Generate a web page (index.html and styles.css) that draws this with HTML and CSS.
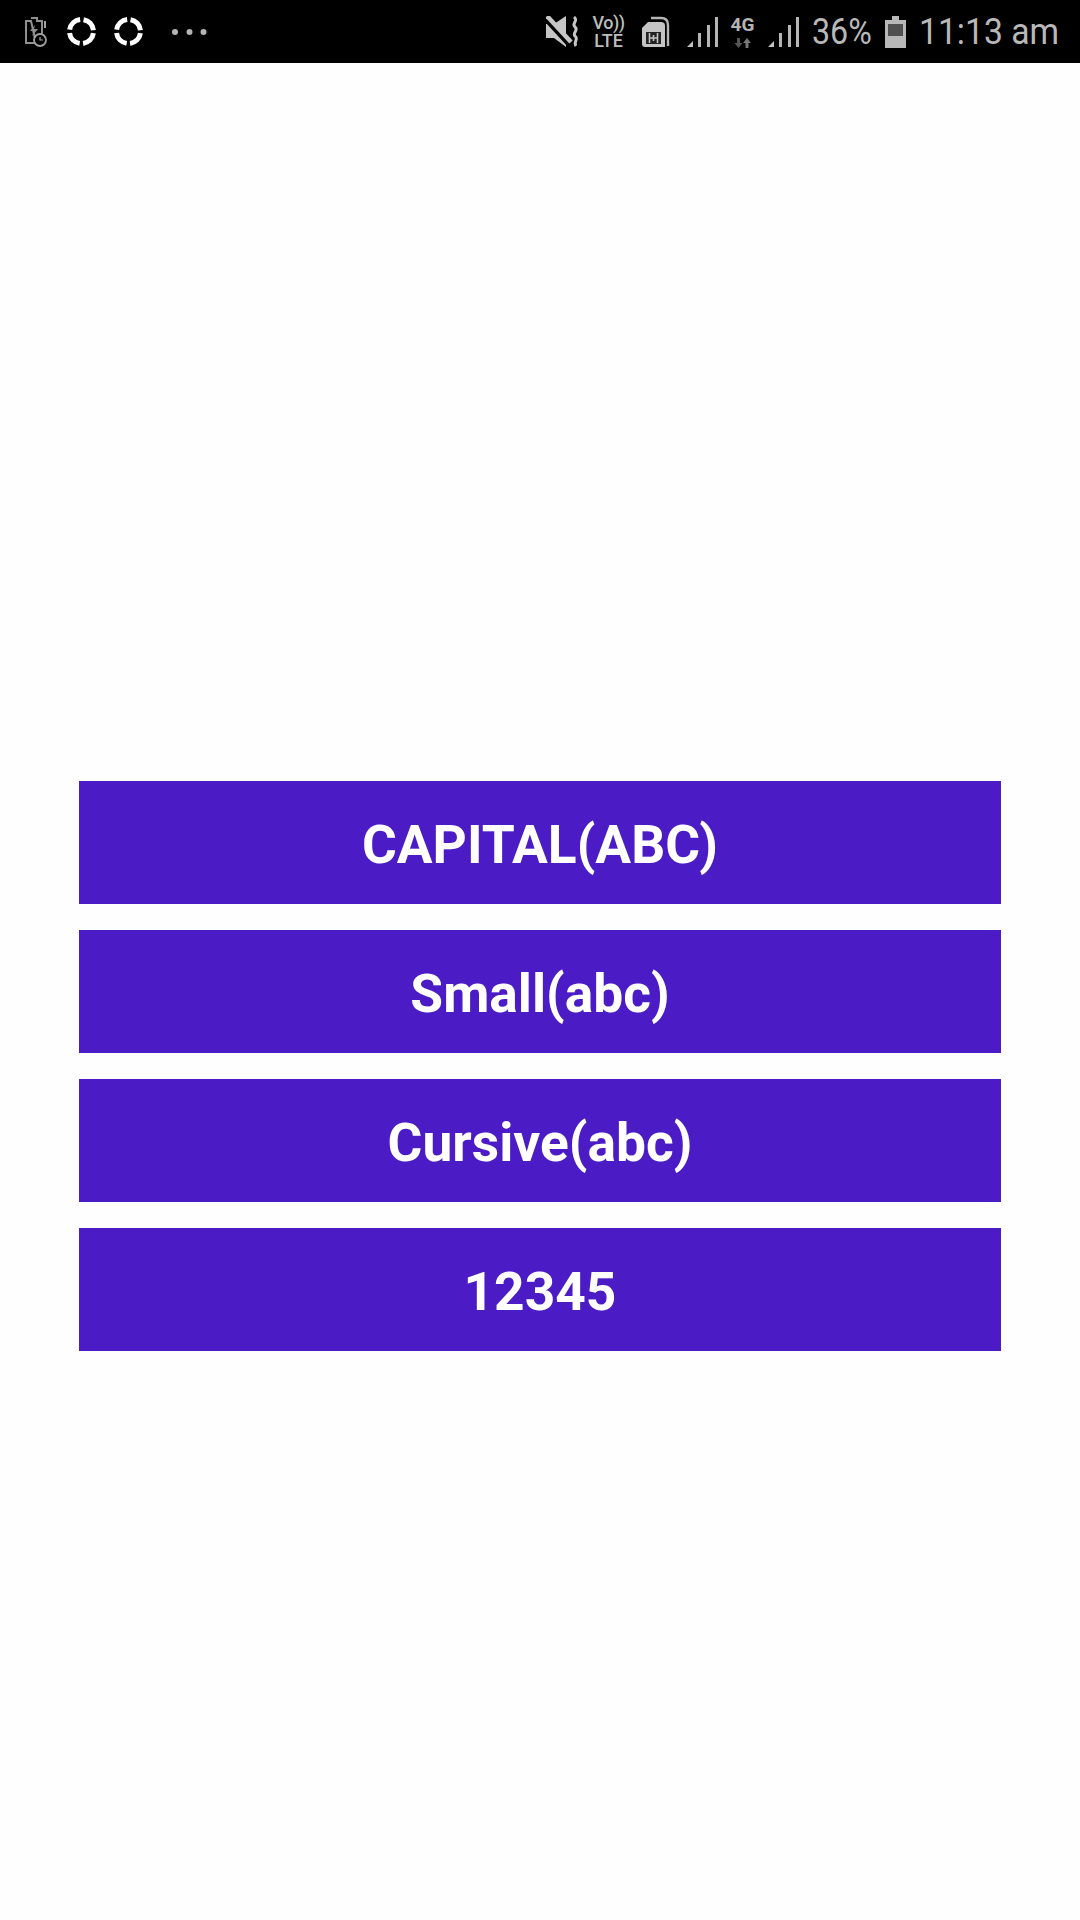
FILE: index.html
```html
<!DOCTYPE html>
<html lang="en">
<head>
<meta charset="utf-8">
<title>Letters</title>
<link rel="stylesheet" href="styles.css">
</head>
<body>
<div class="status">
  <div class="status-left">
    <svg class="i-charge" viewBox="0 0 24 30"><path d="M7 1h6v3h5v14M12 26H2V4h5z" fill="none" stroke="#8f8f8f" stroke-width="2"/><path d="M11 8L6 14h4l-2 5 6-7h-4z" fill="#8f8f8f"/><path d="M21 4v7" stroke="#a0a0a0" stroke-width="2"/><circle cx="16" cy="23" r="6" fill="#000" stroke="#a0a0a0" stroke-width="1.8"/><path d="M16 20v3h3" fill="none" stroke="#a0a0a0" stroke-width="1.2"/></svg>
    <svg class="i-ring" viewBox="0 0 29 29"><circle cx="14.5" cy="14.5" r="12" fill="none" stroke="#fff" stroke-width="5" stroke-dasharray="15.35 3.5" stroke-dashoffset="-1.75"/></svg>
    <svg class="i-ring" viewBox="0 0 29 29"><circle cx="14.5" cy="14.5" r="12" fill="none" stroke="#fff" stroke-width="5" stroke-dasharray="15.35 3.5" stroke-dashoffset="-1.75"/></svg>
    <svg class="i-dots" viewBox="0 0 36 8"><circle cx="3" cy="4" r="3" fill="#b5b5b5"/><circle cx="17.5" cy="4" r="3" fill="#b5b5b5"/><circle cx="31.5" cy="4" r="3" fill="#b5b5b5"/></svg>
  </div>
  <div class="status-right">
    <svg class="i-mute" viewBox="0 0 34 31"><path d="M0 8h8L20 0v31L8 22H0z" fill="#c6c6c6"/><path d="M1 3l24 26" stroke="#000" stroke-width="7"/><path d="M1 0l24 26" stroke="#c6c6c6" stroke-width="4.500"/><path d="M28 1c5 4-3 6 1 10 4 3-3 6 0 9 4 3-2 6 1 10" fill="none" stroke="#c6c6c6" stroke-width="3"/></svg>
    <div class="volte"><span class="vo">Vo))</span><span class="lte">LTE</span></div>
    <svg class="i-sim" viewBox="0 0 29 32"><path d="M10 2h10q7 0 7 7v21" fill="none" stroke="#b5b5b5" stroke-width="2.4"/><path d="M7 6h13q4 0 4 4v21H4q-3 0-3-3V12z" fill="#c4c4c4"/><rect x="5" y="16" width="15" height="12" fill="#222"/><path d="M8.500 17v10M16.500 17v10M8.500 22h8M12.500 19v6" stroke="#c4c4c4" stroke-width="1.600"/></svg>
    <svg class="i-signal" viewBox="0 0 31 31"><path d="M0 31l6-6v6z" fill="#c2c2c2"/><path d="M11 17h3v14h-3zM20 9h3v22h-3zM28 1h3v30h-3z" fill="#b5b5b5"/></svg>
    <div class="net"><span class="net-4g">4G</span><svg class="i-arrows" viewBox="0 0 18 10"><path d="M3 0h3v5h2.500L4.500 10 .5 5H3z" fill="#555"/><path d="M13 0l4 5h-2.500v5h-3V5H9z" fill="#777"/></svg></div>
    <svg class="i-signal" viewBox="0 0 31 31"><path d="M0 31l6-6v6z" fill="#c2c2c2"/><path d="M11 17h3v14h-3zM20 9h3v22h-3zM28 1h3v30h-3z" fill="#b5b5b5"/></svg>
    <span class="pct">36%</span>
    <svg class="i-batt" viewBox="0 0 21 32"><path d="M7 0h7v4h7v28H0V4h7z" fill="#b8b8b8"/><rect x="3" y="8" width="15" height="12" fill="#505050"/></svg>
    <span class="clock">11:13 am</span>
  </div>
</div>
<main class="content">
  <button class="choice">CAPITAL(ABC)</button>
  <button class="choice">Small(abc)</button>
  <button class="choice">Cursive(abc)</button>
  <button class="choice">12345</button>
</main>
</body>
</html>
```
FILE: styles.css
```css
* { box-sizing: border-box; }
html, body { margin: 0; padding: 0; }
body {
  width: 1080px;
  height: 1920px;
  background: #fefefe;
  font-family: Roboto, "Liberation Sans", sans-serif;
  overflow: hidden;
}
.status {
  height: 63px;
  background: #000;
  display: flex;
  justify-content: space-between;
  align-items: center;
  padding: 0 22px 0 24px;
}
.status-left, .status-right { display: flex; align-items: center; height: 63px; }
svg { display: block; flex: none; }
.i-charge { width: 24px; height: 30px; margin-right: 19px; }
.i-ring { width: 29px; height: 29px; margin-right: 18px; }
.i-dots { width: 36px; height: 8px; margin-left: 11px; }
.i-mute { width: 34px; height: 31px; margin-right: 12px; }
.volte {
  width: 33px;
  margin-right: 16px;
  display: flex;
  flex-direction: column;
  align-items: center;
  color: #bdbdbd;
  font-weight: 500;
  font-size: 18px;
  line-height: 18px;
  white-space: nowrap;
}
.vo { letter-spacing: -0.5px; }
.i-sim { width: 29px; height: 32px; margin-right: 17px; }
.i-signal { width: 31px; height: 31px; }
.net {
  width: 25px;
  margin: 0 13px 0 12px;
  display: flex;
  flex-direction: column;
  align-items: center;
  color: #b5b5b5;
  font-weight: 700;
}
.net-4g { font-size: 19px; line-height: 20px; white-space: nowrap; }
.i-arrows { width: 18px; height: 10px; margin-top: 3px; }
.pct, .clock {
  font-size: 37px;
  line-height: 63px;
  color: #b8b8b8;
  white-space: nowrap;
  transform-origin: left center;
}
.pct {
  width: 60px;
  margin: 0 13px;
  transform: scaleX(0.87);
}
.i-batt { width: 21px; height: 32px; margin-right: 13px; }
.clock {
  width: 139px;
  transform: scaleX(0.91);
}
.content {
  display: flex;
  flex-direction: column;
  gap: 26.500px;
  padding: 718px 79px 0;
}
.choice {
  height: 122.500px;
  width: 100%;
  border: 0;
  padding: 5px 0 0;
  background: #4b1cc5;
  color: #fff;
  font-family: Roboto, "Liberation Sans", sans-serif;
  font-weight: 700;
  font-size: 53.300px;
  text-align: center;
}
```
